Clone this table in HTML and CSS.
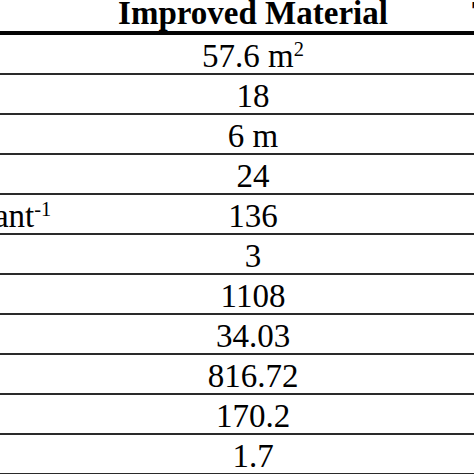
FILE: index.html
```html
<!DOCTYPE html>
<html lang="en">
<head>
    <meta charset="UTF-8">
    <meta name="viewport" content="width=device-width, initial-scale=1.0">
    <title>Material Comparison</title>
    <link rel="stylesheet" href="styles.css">
</head>
<body>
    <table class="compare">
        <thead>
            <tr>
                <th class="param"></th>
                <th class="improved">Improved Material</th>
                <th class="traditional">Traditional Material</th>
            </tr>
        </thead>
        <tbody>
            <tr><td class="param">Area</td><td class="improved">57.6 m<sup>2</sup></td><td class="traditional"></td></tr>
            <tr><td class="param">Beds</td><td class="improved">18</td><td class="traditional"></td></tr>
            <tr><td class="param">Length</td><td class="improved">6 m</td><td class="traditional"></td></tr>
            <tr><td class="param">Rows</td><td class="improved">24</td><td class="traditional"></td></tr>
            <tr><td class="param">Fruits plant<sup>-1</sup></td><td class="improved">136</td><td class="traditional"></td></tr>
            <tr><td class="param">Cycles</td><td class="improved">3</td><td class="traditional"></td></tr>
            <tr><td class="param">Cost</td><td class="improved">1108</td><td class="traditional"></td></tr>
            <tr><td class="param">Yield</td><td class="improved">34.03</td><td class="traditional"></td></tr>
            <tr><td class="param">Income</td><td class="improved">816.72</td><td class="traditional"></td></tr>
            <tr><td class="param">Profit</td><td class="improved">170.2</td><td class="traditional"></td></tr>
            <tr><td class="param">Ratio</td><td class="improved">1.7</td><td class="traditional"></td></tr>
        </tbody>
    </table>
</body>
</html>
```
FILE: styles.css
```css
* {
    margin: 0;
    padding: 0;
    box-sizing: border-box;
}

html,
body {
    overflow: hidden;
    background: #fff;
}

body {
    font-family: 'Liberation Serif', 'Times New Roman', serif;
    color: #000;
}

.compare {
    border-collapse: separate;
    border-spacing: 0;
    table-layout: fixed;
    width: 874px;
    margin-left: -124px;
}

.compare th,
.compare td {
    white-space: nowrap;
    overflow: visible;
}

.compare th {
    font-size: 33px;
    font-weight: bold;
    line-height: 26px;
    padding-bottom: 5px;
    border-bottom: 4px solid #050505;
}

.compare td {
    font-size: 33px;
    line-height: 32px;
    height: 40px;
    padding-top: 5px;
    border-bottom: 2px solid #2a2a2a;
    vertical-align: top;
}

.param {
    width: 180px;
    text-align: left;
    padding-left: 7px;
}

.improved {
    width: 394px;
    text-align: center;
}

.traditional {
    width: 300px;
    text-align: left;
}

th.traditional {
    padding-left: 22px;
}

sup {
    font-size: 0.62em;
    line-height: 0;
    vertical-align: 0.55em;
}
```
